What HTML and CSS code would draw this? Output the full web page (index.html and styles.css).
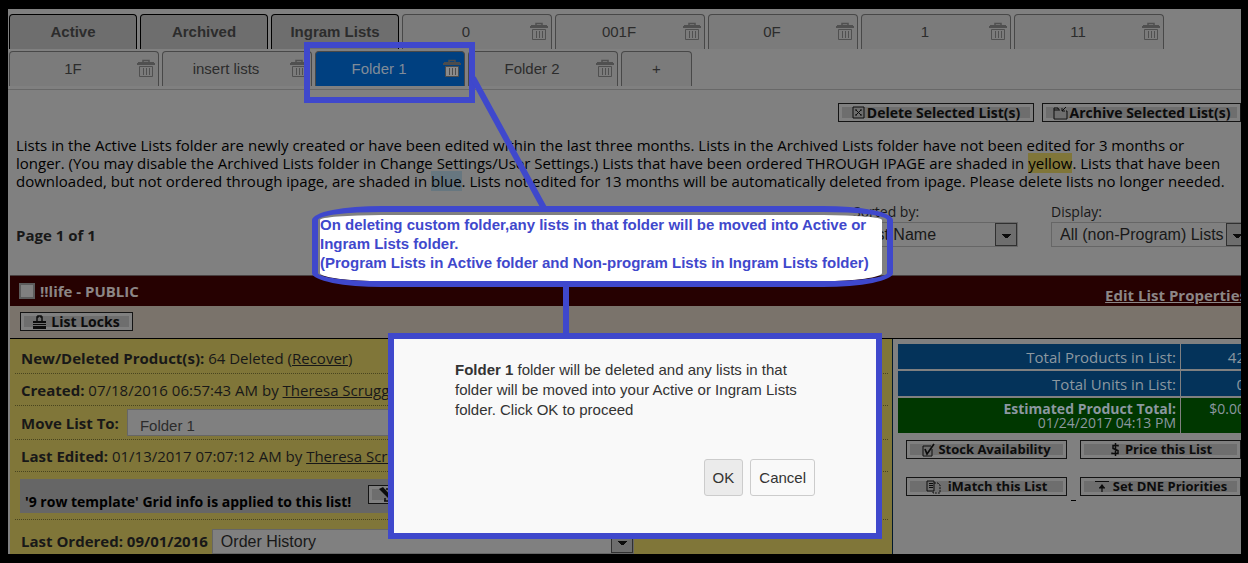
FILE: index.html
```html
<!DOCTYPE html>
<html lang="en">
<head>
  <meta charset="UTF-8">
  <meta name="viewport" content="width=device-width, initial-scale=1">
  <title>ipage - Lists</title>
  <link rel="stylesheet" href="styles.css">
</head>
<body>

  <svg class="sprite" aria-hidden="true">
    <symbol id="trash" viewBox="0 0 18 19">
      <path d="M6 3V1.500h6V3" fill="none" stroke="currentColor" stroke-width="1.500"/>
      <rect x="1" y="3" width="16" height="2" fill="currentColor"/>
      <rect x="0" y="4" width="18" height="2" fill="currentColor"/>
      <path d="M2.500 7.500h13v10h-13z" stroke="currentColor"/>
      <path d="M6.500 9v7M9.500 9v7M12.500 9v7" stroke="currentColor"/>
    </symbol>
  </svg>

  <main class="page">

    <nav class="tabs">
      <button class="tab system">Active</button>
      <button class="tab system">Archived</button>
      <button class="tab system">Ingram Lists</button>
      <button class="tab">0<svg class="trash"><use href="#trash"/></svg></button>
      <button class="tab">001F<svg class="trash"><use href="#trash"/></svg></button>
      <button class="tab">0F<svg class="trash"><use href="#trash"/></svg></button>
      <button class="tab">1<svg class="trash"><use href="#trash"/></svg></button>
      <button class="tab">11<svg class="trash"><use href="#trash"/></svg></button>
      <button class="tab">1F<svg class="trash"><use href="#trash"/></svg></button>
      <button class="tab">insert lists<svg class="trash"><use href="#trash"/></svg></button>
      <button class="tab selected">Folder 1<svg class="trash"><use href="#trash"/></svg></button>
      <button class="tab">Folder 2<svg class="trash"><use href="#trash"/></svg></button>
      <button class="tab add">+</button>
    </nav>

    <div class="list-actions">
      <button class="btn delete">
        <svg width="13" height="13" viewBox="0 0 13 13"><path d="M1 1h11v11H1zM4 4l5 5M9 4L4 9M3 4h2M8 4h2M3 9h2M8 9h2" fill="none" stroke="#0c0c0c"/></svg>
        Delete Selected List(s)
      </button>
      <button class="btn archive">
        <svg width="15" height="14" viewBox="0 0 15 14"><path d="M6 3H5V2H1v11h13V5h-1M1 4h6" fill="none" stroke="#0c0c0c"/><path d="M13 1L9 5M9 2v3h3" fill="none" stroke="#0c0c0c"/></svg>
        Archive Selected List(s)
      </button>
    </div>

    <p class="intro">
      Lists in the Active Lists folder are newly created or have been edited within the last three months. Lists in the Archived Lists folder have not been edited for 3 months or<br>
      longer. (You may disable the Archived Lists folder in Change Settings/User Settings.) Lists that have been ordered THROUGH IPAGE are shaded in <span class="yellow">yellow</span>. Lists that have been<br>
      downloaded, but not ordered through ipage, are shaded in <span class="blue">blue</span>. Lists not edited for 13 months will be automatically deleted from ipage. Please delete lists no longer needed.
    </p>

    <div class="filters">
      <span class="pager">Page 1 of 1</span>
      <div class="filter sort">
        <label for="sort">Sorted by:</label>
        <span class="select"><select id="sort"><option>List Name</option></select></span>
      </div>
      <div class="filter display">
        <label for="display">Display:</label>
        <span class="select"><select id="display"><option>All (non-Program) Lists</option></select></span>
      </div>
    </div>

    <section class="list">
      <header class="list-title">
        <input type="checkbox" id="pick">
        <label for="pick">!!life - PUBLIC</label>
        <a href="#">Edit List Properties</a>
      </header>
      <div class="list-tools">
        <button class="btn locks">
          <svg width="13" height="14" viewBox="0 0 13 14"><path d="M4 6V2h1V1h3v1h1v4" fill="none" stroke="#0c0c0c" stroke-width="1.500"/><path d="M0 6h13v2H0zM0 9h13v1H0zM0 11h13v3H0z" fill="#0c0c0c"/></svg>
          List Locks
        </button>
      </div>

      <div class="list-body">
        <div class="details">
          <div class="row tall"><b>New/Deleted Product(s):</b>&nbsp;64 Deleted (<a href="#">Recover</a>)</div>
          <div class="row"><b>Created:</b>&nbsp;07/18/2016 06:57:43 AM by&nbsp;<a href="#">Theresa Scruggs</a></div>
          <div class="row tall">
            <label for="move">Move List To:</label>
            <span class="select move"><select id="move"><option>Folder 1</option></select></span>
          </div>
          <div class="row"><b>Last Edited:</b>&nbsp;01/13/2017 07:07:12 AM by&nbsp;<a href="#">Theresa Scruggs</a></div>
          <div class="row grid-row">
            <div class="grid-info">
              <b>'9 row template' Grid info is applied to this list!</b>
              <button class="btn edit" aria-label="Edit grid">
                <svg width="16" height="15" viewBox="0 0 16 15"><path d="M1 2l4-2 8 9 1 4-4-2z" fill="#0c0c0c"/><path d="M8 2h6v3M6 14h9M7 11v3" fill="none" stroke="#0c0c0c" stroke-width="1.500"/></svg>
              </button>
            </div>
          </div>
          <div class="row last">
            <label for="history">Last Ordered: 09/01/2016</label>
            <span class="select history"><select id="history"><option>Order History</option></select></span>
          </div>
        </div>

        <aside class="summary">
          <table>
            <tr><th>Total Products in List:</th><td>42</td></tr>
            <tr><th>Total Units in List:</th><td>0</td></tr>
            <tr class="total"><th><b>Estimated Product Total:</b><br>01/24/2017 04:13 PM</th><td>$0.00</td></tr>
          </table>
          <div class="summary-actions">
            <button class="btn">
              <svg width="14" height="14" viewBox="0 0 14 14"><path d="M9 3H1v10h9V6" fill="none" stroke="#0c0c0c"/><path d="M3 6l2 5L12 1" fill="none" stroke="#0c0c0c" stroke-width="1.700"/></svg>
              Stock Availability
            </button>
            <button class="btn">
              <svg width="14" height="15" viewBox="0 0 14 15"><path d="M9 4.500V3.500H4v3l5 2v3H3v-1M6.500 1v13" fill="none" stroke="#0c0c0c" stroke-width="1.500"/></svg>
              Price this List
            </button>
            <button class="btn">
              <svg width="20" height="14" viewBox="0 0 20 14"><path d="M1 1h7v10H1zM3 3.500h4M3 5.500h4M3 7.500h4" fill="none" stroke="#0c0c0c"/><path d="M8 3h4l2 2v8H7v-2" fill="none" stroke="#0c0c0c" stroke-dasharray="2 1"/></svg>
              iMatch this List
            </button>
            <button class="btn">
              <svg width="17" height="13" viewBox="0 0 17 13"><path d="M1 1.500h14M8 5v7M5 8h6" fill="none" stroke="#0c0c0c" stroke-width="1.200"/><path d="M5 8l3-4 3 4z" fill="#0c0c0c"/></svg>
              Set DNE Priorities
            </button>
            <i class="dash"></i>
          </div>
        </aside>
      </div>
    </section>
  </main>

  <!-- annotations -->
  <div class="highlight"></div>
  <svg class="connectors" width="300" height="280" viewBox="0 0 300 280"><path d="M3 6L75 138M96 212V264" fill="none" stroke="#3f48cc" stroke-width="6"/></svg>
  <div class="callout">
    On deleting custom folder,any lists in that folder will be moved into Active or<br>
    Ingram Lists folder.<br>
    (Program Lists in Active folder and Non-program Lists in Ingram Lists folder)
  </div>

  <div class="dialog" role="dialog">
    <p><b>Folder 1</b> folder will be deleted and any lists in that folder will be moved into your Active or Ingram Lists folder. Click OK to proceed</p>
    <div class="dialog-buttons">
      <button class="ok">OK</button>
      <button>Cancel</button>
    </div>
  </div>

</body>
</html>
```
FILE: styles.css
```css
* {
  box-sizing: border-box;
}

body {
  margin: 0;
  padding: 9px 7px 9px 8px;
  height: 100vh;
  background: #000;
  position: relative;
  overflow: hidden;
  font-family: "Open Sans", sans-serif;
  font-size: 15px;
  color: #181818;
}

button, select {
  font: inherit;
  color: inherit;
}

a {
  color: inherit;
}

.sprite {
  position: absolute;
  width: 0;
  height: 0;
}

.page {
  height: 100%;
  overflow: hidden;
  background: #808080;
}

/* folder tabs */
.tabs {
  display: flex;
  flex-wrap: wrap;
  gap: 2px 3px;
  padding: 5px 1px 3px;
  border-bottom: 1px solid #686868;
}

.tab {
  position: relative;
  width: 150px;
  height: 35px;
  padding: 0 22px 2px 0;
  border: 1px solid #484848;
  border-bottom: 0;
  border-radius: 4px 4px 0 0;
  background: #7b7b7b;
  color: #2c2c2c;
  font-family: "Liberation Sans", Arial, sans-serif;
  font-size: 15px;
}

.tab.system {
  width: 128px;
  padding: 0 0 2px;
  border-color: #000;
  background: #6e6e6e;
  font-weight: bold;
}

.tab.selected {
  background: #004080;
  color: #808c98;
}

.tab.add {
  width: 71px;
  padding: 0 0 2px;
}

.trash {
  position: absolute;
  top: 7px;
  right: 3px;
  width: 18px;
  height: 19px;
  color: #505050;
  fill: none;
}

.selected .trash {
  color: #4c4c4c;
  fill: #8a8a8a;
}

/* bevelled buttons */
.btn {
  display: flex;
  align-items: center;
  justify-content: center;
  gap: 2px;
  height: 19px;
  padding: 0;
  border: 1px solid #141414;
  background: #6e6e6e;
  box-shadow: inset 0 0 0 3px #808080;
  color: #0c0c0c;
  font-size: 13px;
  font-weight: bold;
  line-height: 17px;
  white-space: nowrap;
}

.list-actions {
  display: flex;
  justify-content: flex-end;
  gap: 8px;
  padding-top: 13px;
}

.delete,
.archive,
.locks {
  font-size: 14px;
}

.delete {
  width: 196px;
}

.archive {
  width: 199px;
}

.intro {
  margin: 14px 0 0 8px;
  line-height: 18px;
  color: #000;
  white-space: nowrap;
}

.yellow {
  background: #807639;
}

.blue {
  background: #677780;
}

/* pager and drop-downs */
.filters {
  display: flex;
  margin: 12px -8px 0 0;
  padding-left: 8px;
  height: 73px;
}

.pager {
  flex: 1;
  padding-top: 23px;
  line-height: 20px;
  font-weight: bold;
}

.filter {
  display: flex;
  flex-direction: column;
  font-size: 14px;
}

.filter label {
  line-height: 20px;
}

.sort {
  width: 165px;
  margin-right: 33px;
}

.display {
  width: 198px;
}

.select {
  position: relative;
  display: block;
  height: 25px;
  font-family: "Liberation Sans", Arial, sans-serif;
  font-size: 16px;
}

.select select {
  appearance: none;
  width: 100%;
  height: 100%;
  padding: 0 8px;
  border: 1px solid #666;
  border-radius: 0;
  background: #808080;
}

.sort select {
  padding-left: 10px;
}

.select::after {
  content: "";
  position: absolute;
  top: 1px;
  right: 1px;
  bottom: 1px;
  width: 20px;
  border: 1px solid #303030;
  background: linear-gradient(#0c0c0c, #0c0c0c) 6px 10px / 9px 1px no-repeat,
    linear-gradient(#0c0c0c, #0c0c0c) 7px 11px / 7px 1px no-repeat,
    linear-gradient(#0c0c0c, #0c0c0c) 8px 12px / 5px 1px no-repeat,
    linear-gradient(#0c0c0c, #0c0c0c) 9px 13px / 3px 1px no-repeat,
    #6e6e6e;
}

/* list card */
.list {
  margin: 0 -8px 0 2px;
  border-top: 1px solid #484040;
}

.list-title {
  display: flex;
  align-items: center;
  height: 30px;
  padding: 0 2px 0 9px;
  background: #260101;
  color: #8c8686;
  font-weight: bold;
}

.list-title input {
  appearance: none;
  width: 16px;
  height: 16px;
  margin: 0 5px 0 0;
  border: 2px solid #5c5c5c;
  background: #808080;
}

.list-title a {
  margin-left: auto;
  padding-top: 8px;
}

.list-tools {
  height: 33px;
  padding: 6px 10px;
  border-bottom: 1px solid #000;
  background: #7a736b;
}

.locks {
  width: 113px;
  gap: 5px;
}

.list-body {
  display: flex;
}

.details {
  flex: 1;
  padding: 0 4px 0 5px;
  border-right: 1px solid #00182c;
  background: #807639;
}

.row {
  display: flex;
  align-items: center;
  height: 32px;
  padding-left: 6px;
  border-bottom: 1px dotted #48441f;
  white-space: nowrap;
}

.row.tall {
  height: 34px;
}

.row.tall:first-child {
  height: 35px;
  padding-top: 4px;
}

.row label {
  font-weight: bold;
}

.move {
  width: 500px;
  height: 27px;
  margin-left: 8px;
}

.move select {
  padding: 5px 12px 0;
  color: #2c2c2c;
  font-size: 15px;
}

.grid-row {
  height: 48px;
  padding-left: 5px;
}

.grid-info {
  display: flex;
  align-items: flex-start;
  gap: 17px;
  width: 600px;
  height: 34px;
  padding: 6px 5px 0;
  background: #666;
  color: #000;
  font-size: 14px;
}

.grid-info b {
  padding-top: 7px;
}

.edit {
  width: 36px;
}

.row.last {
  height: 42px;
  border-bottom: 0;
}

.history {
  width: 422px;
  margin-left: 4px;
}

/* totals */
.summary {
  width: 356px;
  padding: 5px 0 0 5px;
}

.summary table {
  width: 100%;
  border-spacing: 0;
  color: #8c98a0;
  line-height: 14px;
}

.summary th,
.summary td {
  height: 27px;
  padding: 0 4px;
  border-bottom: 2px solid #808080;
  background: #04335a;
  font-weight: normal;
  text-align: right;
  vertical-align: middle;
}

.summary td {
  width: 69px;
  border-left: 1px solid #808080;
}

.summary .total th,
.summary .total td {
  height: 35px;
  border-bottom: 0;
  background: #003700;
  font-size: 14px;
}

.summary .total td {
  padding-top: 4px;
  vertical-align: top;
}

.summary-actions {
  position: relative;
  display: grid;
  grid-template-columns: 161px 161px;
  gap: 18px 13px;
  padding: 7px 8px 8px;
}

.dash {
  position: absolute;
  left: 173px;
  bottom: 3px;
  width: 5px;
  height: 1px;
  background: #000;
}

/* annotations over the page */
.highlight {
  position: absolute;
  left: 304px;
  top: 42px;
  width: 171px;
  height: 61px;
  border: 6px solid #3f48cc;
}

.connectors {
  position: absolute;
  left: 470px;
  top: 72px;
}

.callout {
  position: absolute;
  left: 312px;
  top: 206px;
  width: 581px;
  height: 81px;
  padding: 3px 5px 0 2px;
  border: 6px solid #3f48cc;
  border-radius: 70px / 14px;
  background: #fff content-box;
  color: #3f48cc;
  font: bold 15px/19px "Liberation Sans", Arial, sans-serif;
  white-space: nowrap;
}

.dialog {
  position: absolute;
  left: 388px;
  top: 333px;
  width: 494px;
  height: 206px;
  padding: 21px 61px;
  border: 6px solid #3f48cc;
  background: #f9f9f9;
  color: #333;
  font: 15px/20px "Liberation Sans", Arial, sans-serif;
}

.dialog p {
  margin: 0;
}

.dialog-buttons {
  display: flex;
  justify-content: flex-end;
  gap: 7px;
  margin-top: 39px;
}

.dialog-buttons button {
  height: 37px;
  padding: 0 8px;
  border: 1px solid #ccc;
  border-radius: 3px;
  background: #f9f9f9;
}

.dialog-buttons .ok {
  background: #ebebeb;
}
```
